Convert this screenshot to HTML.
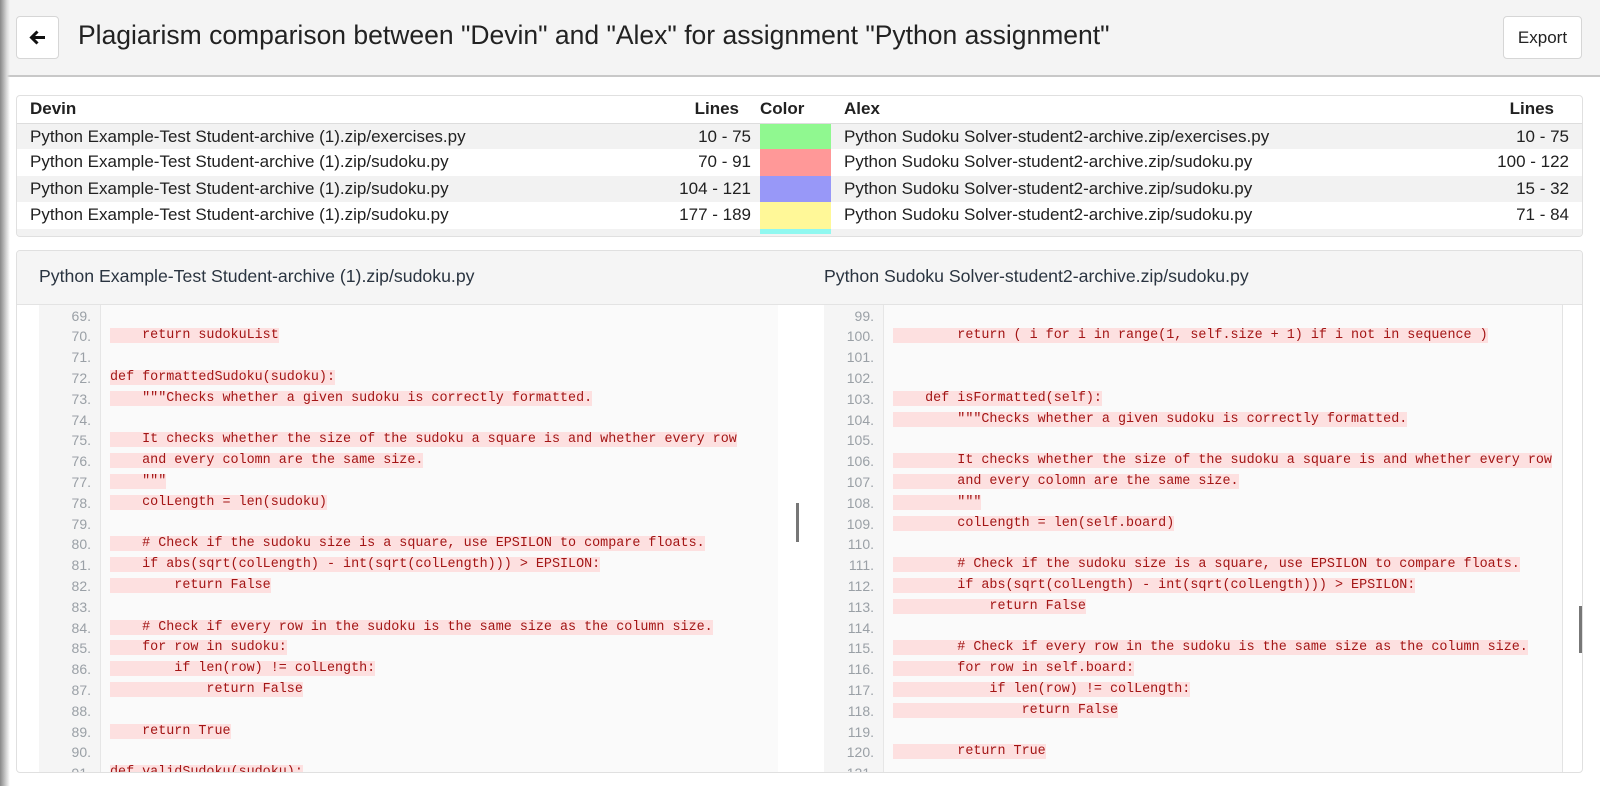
<!DOCTYPE html>
<html><head><meta charset="utf-8"><style>
*{box-sizing:border-box;margin:0;padding:0}
body{width:1600px;height:786px;overflow:hidden;background:#fff;font-family:"Liberation Sans",sans-serif;color:#212121;position:relative}
.shadow{position:absolute;left:0;top:0;width:10px;height:786px;background:linear-gradient(90deg,#888,#ddd 70%,rgba(255,255,255,0));z-index:5}
.hdr{position:absolute;left:0;top:0;width:1600px;height:77px;background:#f4f4f4;border-bottom:2px solid #c8c8c8}
.btn{position:absolute;top:16px;height:43px;background:#fff;border:1px solid #d6d6d6;border-radius:4px}
.title{position:absolute;left:78px;top:20px;font-size:26.5px;color:#222}
.tbl{position:absolute;left:16px;top:95px;width:1567px;height:142px;border:1px solid #e0e0e0;border-radius:4px;overflow:hidden;font-size:17px}
.row{position:absolute;left:0;width:1567px;height:26.5px;line-height:26.5px}
.row span{position:absolute}
.code{position:absolute;left:16px;top:250px;width:1567px;height:523px;border:1px solid #e0e0e0;border-radius:4px;overflow:hidden;background:#fff}
.ch{position:absolute;left:0;top:0;width:1567px;height:54px;background:#f5f5f5;border-bottom:1px solid #e3e3e3;font-size:17.7px;color:#2a3440}
.pane{position:absolute;top:54px;height:469px;background:#fafafa;overflow:hidden}
.gut{position:absolute;top:0;height:469px;background:#f5f5f5;border-right:1px solid #e6e6e6}
.ln{position:absolute;font-family:"Liberation Mono",monospace;font-size:13.4px;height:20.8px;line-height:20.8px;white-space:pre}
.num{color:#9aa0a6;text-align:right;font-family:"Liberation Sans",sans-serif;font-size:14px}
.c span{background:#fde0e0;color:#a31515;display:inline-block;height:15px;line-height:15px}
</style></head><body>
<div class="shadow"></div>
<div class="hdr">
<div class="btn" style="left:16px;width:43px"><svg width="43" height="43" viewBox="0 0 43 43" style="position:absolute;left:-1px;top:-1px"><path d="M29 21.5H16M21.5 15.5l-6 6 6 6" stroke="#111" stroke-width="3" fill="none"/></svg></div>
<div class="title">Plagiarism comparison between "Devin" and "Alex" for assignment "Python assignment"</div>
<div class="btn" style="left:1503px;width:79px;font-size:17px;line-height:41px;text-align:center;color:#222">Export</div>
</div>
<div class="tbl">
<div class="row" style="top:0;font-weight:bold"><span style="left:13px">Devin</span><span style="right:845px">Lines</span><span style="left:743px">Color</span><span style="left:827px">Alex</span><span style="right:30px">Lines</span></div>
<div class="row" style="top:26.5px;background:#f2f2f2;border-top:1px solid #ddd"><span style="left:13px">Python Example-Test Student-archive (1).zip/exercises.py</span><span style="right:833px">10 - 75</span><span style="left:743px;width:71px;height:27px;background:#90f890"></span><span style="left:827px">Python Sudoku Solver-student2-archive.zip/exercises.py</span><span style="right:15px">10 - 75</span></div>
<div class="row" style="top:53px"><span style="left:13px">Python Example-Test Student-archive (1).zip/sudoku.py</span><span style="right:833px">70 - 91</span><span style="left:743px;width:71px;height:27px;background:#ff9898"></span><span style="left:827px">Python Sudoku Solver-student2-archive.zip/sudoku.py</span><span style="right:15px">100 - 122</span></div>
<div class="row" style="top:79.5px;background:#f2f2f2"><span style="left:13px">Python Example-Test Student-archive (1).zip/sudoku.py</span><span style="right:833px">104 - 121</span><span style="left:743px;width:71px;height:27px;background:#9898f8"></span><span style="left:827px">Python Sudoku Solver-student2-archive.zip/sudoku.py</span><span style="right:15px">15 - 32</span></div>
<div class="row" style="top:106px"><span style="left:13px">Python Example-Test Student-archive (1).zip/sudoku.py</span><span style="right:833px">177 - 189</span><span style="left:743px;width:71px;height:27px;background:#fff898"></span><span style="left:827px">Python Sudoku Solver-student2-archive.zip/sudoku.py</span><span style="right:15px">71 - 84</span></div>
<div class="row" style="top:132.5px;background:#f2f2f2"><span style="left:743px;width:71px;height:5px;background:#90f8f0"></span></div>
</div>
<div class="code">
<div class="ch"><span style="position:absolute;left:22px;top:15px">Python Example-Test Student-archive (1).zip/sudoku.py</span><span style="position:absolute;left:807px;top:15px">Python Sudoku Solver-student2-archive.zip/sudoku.py</span></div>
<div class="pane" style="left:22px;width:739px"><div class="gut" style="left:0;width:62px"></div><div id="L"></div></div>
<div style="position:absolute;left:779px;top:252px;width:3px;height:39px;background:#777"></div>
<div class="pane" style="left:807px;width:738px"><div class="gut" style="left:0;width:60px"></div><div id="R"></div></div>
<div style="position:absolute;left:1545px;top:54px;width:1px;height:469px;background:#e3e3e3"></div>
<div style="position:absolute;left:1562px;top:355px;width:3px;height:47px;background:#777"></div>
</div>
<script>
function build(id,start,lines,gw){
 var h='';
 for(var i=0;i<lines.length;i++){
  var t=i*20.8+0.5;
  h+='<div class="ln num" style="left:0;width:'+(gw-10)+'px;top:'+t+'px">'+(start+i)+'.</div>';
  if(lines[i]!==null) h+='<div class="ln c" style="left:'+(gw+9)+'px;top:'+t+'px"><span>'+lines[i].replace(/&/g,'&amp;').replace(/</g,'&lt;')+'</span></div>';
 }
 document.getElementById(id).innerHTML=h;
}
build('L',69,[null,'    return sudokuList',null,'def formattedSudoku(sudoku):','    """Checks whether a given sudoku is correctly formatted.',null,
'    It checks whether the size of the sudoku a square is and whether every row','    and every colomn are the same size.','    """','    colLength = len(sudoku)',null,
'    # Check if the sudoku size is a square, use EPSILON to compare floats.','    if abs(sqrt(colLength) - int(sqrt(colLength))) > EPSILON:','        return False',null,
'    # Check if every row in the sudoku is the same size as the column size.','    for row in sudoku:','        if len(row) != colLength:','            return False',null,'    return True',null,'def validSudoku(sudoku):'],62);
build('R',99,[null,'        return ( i for i in range(1, self.size + 1) if i not in sequence )',null,null,'    def isFormatted(self):','        """Checks whether a given sudoku is correctly formatted.',null,
'        It checks whether the size of the sudoku a square is and whether every row','        and every colomn are the same size.','        """','        colLength = len(self.board)',null,
'        # Check if the sudoku size is a square, use EPSILON to compare floats.','        if abs(sqrt(colLength) - int(sqrt(colLength))) > EPSILON:','            return False',null,
'        # Check if every row in the sudoku is the same size as the column size.','        for row in self.board:','            if len(row) != colLength:','                return False',null,'        return True',null],60);
</script>
</body></html>
